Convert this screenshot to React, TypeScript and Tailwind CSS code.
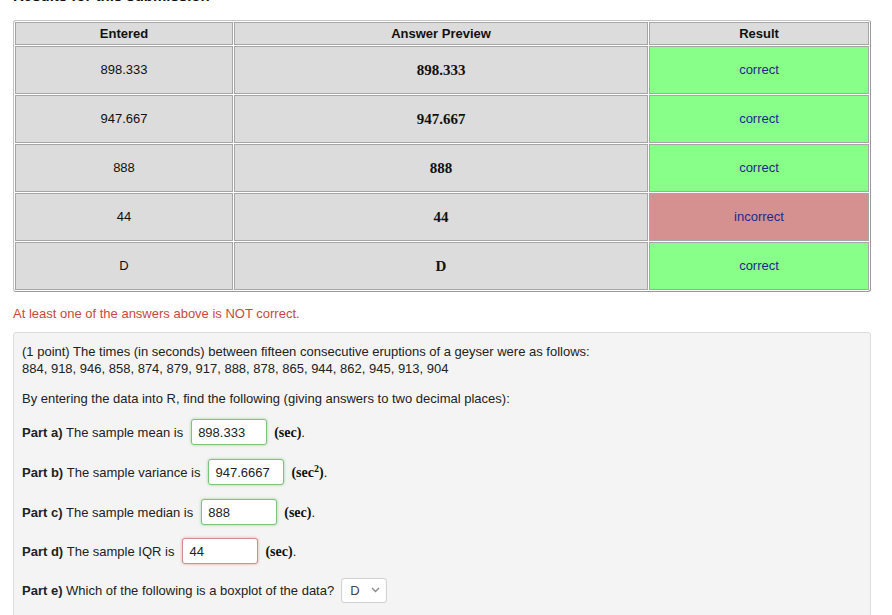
import React from "react";

const rows = [
  { entered: "898.333", preview: "898.333", ok: true },
  { entered: "947.667", preview: "947.667", ok: true },
  { entered: "888", preview: "888", ok: true },
  { entered: "44", preview: "44", ok: false },
  { entered: "D", preview: "D", ok: true },
];

const cell = "border border-[#a6a6a6] p-0 text-center align-middle";

function Sec({ sq }: { sq?: boolean }) {
  return (
    <span className="ml-[7px] text-[13px] text-[#111]">
      <span className="text-[14px] font-bold" style={{ fontFamily: '"Liberation Serif", serif' }}>
        (sec{sq ? <sup className="text-[10px] leading-none">2</sup> : null})
      </span>
      .
    </span>
  );
}

function Field({ value, ok }: { value: string; ok: boolean }) {
  return (
    <span
      className={
        "ml-[8px] inline-flex h-[26px] w-[76px] items-center rounded-[3px] border bg-white pl-[6px] text-[13px] text-[#222] " +
        (ok
          ? "border-[#7cc47c] shadow-[0_0_3px_rgba(92,184,92,0.6)]"
          : "border-[#d98a8a] shadow-[0_0_3px_rgba(217,83,79,0.5)]")
      }
    >
      {value}
    </span>
  );
}

export default function App() {
  return (
    <div
      className="min-h-[615px] bg-white px-[13px] text-[#222]"
      style={{ fontFamily: '"Liberation Sans", Arial, sans-serif' }}
    >
      <h3 className="mt-[-13px] h-[17px] text-[15px] font-bold leading-[17px] text-[#111]">
        Results for this submission
      </h3>
      <div className="mt-[16px] w-[858px] rounded-[3px] border border-[#c4c4c4] border-b-[#9a9a9a] border-r-[#9a9a9a]">
        <table className="w-full border-separate border-spacing-[1px] text-[13px]">
          <colgroup>
            <col className="w-[218px]" />
            <col className="w-[414px]" />
            <col />
          </colgroup>
          <thead>
            <tr>
              <th className={cell + " h-[23px] bg-[#dcdcdc] text-[13px] font-bold text-[#111]"}>Entered</th>
              <th className={cell + " h-[23px] bg-[#dcdcdc] text-[13px] font-bold text-[#111]"}>Answer Preview</th>
              <th className={cell + " h-[23px] bg-[#dcdcdc] text-[13px] font-bold text-[#111]"}>Result</th>
            </tr>
          </thead>
          <tbody>
            {rows.map((r, i) => (
              <tr key={i}>
                <td className={cell + " h-[48px] bg-[#dcdcdc] text-[13px] text-[#111]"}>{r.entered}</td>
                <td
                  className={cell + " h-[48px] bg-[#dcdcdc] text-[15px] font-bold text-[#111]"}
                  style={{ fontFamily: '"Liberation Serif", serif' }}
                >
                  {r.preview}
                </td>
                <td
                  className={
                    cell +
                    " h-[48px] text-[13px] text-[#1c2a8c] " +
                    (r.ok ? "bg-[#88ff88]" : "bg-[#d59090]")
                  }
                >
                  {r.ok ? "correct" : "incorrect"}
                </td>
              </tr>
            ))}
          </tbody>
        </table>
      </div>
      <p className="mt-[14px] text-[13px] leading-[16px] text-[#c9483f]">
        At least one of the answers above is NOT correct.
      </p>
      <div className="mt-[10px] h-[300px] w-[858px] rounded-t-[3px] border border-[#dcdcdc] bg-[#f4f4f4] px-[8px] pt-[10px] text-[13px] leading-[17px] text-[#222]">
        <p>
          (1 point) The times (in seconds) between fifteen consecutive eruptions of a geyser were as follows:
          <br />
          884, 918, 946, 858, 874, 879, 917, 888, 878, 865, 944, 862, 945, 913, 904
        </p>
        <p className="mt-[13px]">
          By entering the data into R, find the following (giving answers to two decimal places):
        </p>
        <div className="mt-[12px] flex h-[26px] items-center">
          <b>Part a)</b>&nbsp;The sample mean is
          <Field value="898.333" ok />
          <Sec />
        </div>
        <div className="mt-[14px] flex h-[26px] items-center">
          <b>Part b)</b>&nbsp;The sample variance is
          <Field value="947.6667" ok />
          <Sec sq />
        </div>
        <div className="mt-[14px] flex h-[26px] items-center">
          <b>Part c)</b>&nbsp;The sample median is
          <Field value="888" ok />
          <Sec />
        </div>
        <div className="mt-[13px] flex h-[26px] items-center">
          <b>Part d)</b>&nbsp;The sample IQR is
          <Field value="44" ok={false} />
          <Sec />
        </div>
        <div className="mt-[13px] flex h-[26px] items-center">
          <b>Part e)</b>&nbsp;Which of the following is a boxplot of the data?
          <span className="ml-[7px] inline-flex h-[25px] w-[46px] items-center justify-between rounded-[3px] border border-[#d0d0d0] bg-white pl-[8px] pr-[6px] text-[13px] text-[#444]">
            D
            <svg width="9" height="6" viewBox="0 0 9 6" fill="none" stroke="#888" strokeWidth="1.3">
              <path d="M1 1l3.5 3.5L8 1" />
            </svg>
          </span>
        </div>
      </div>
    </div>
  );
}
